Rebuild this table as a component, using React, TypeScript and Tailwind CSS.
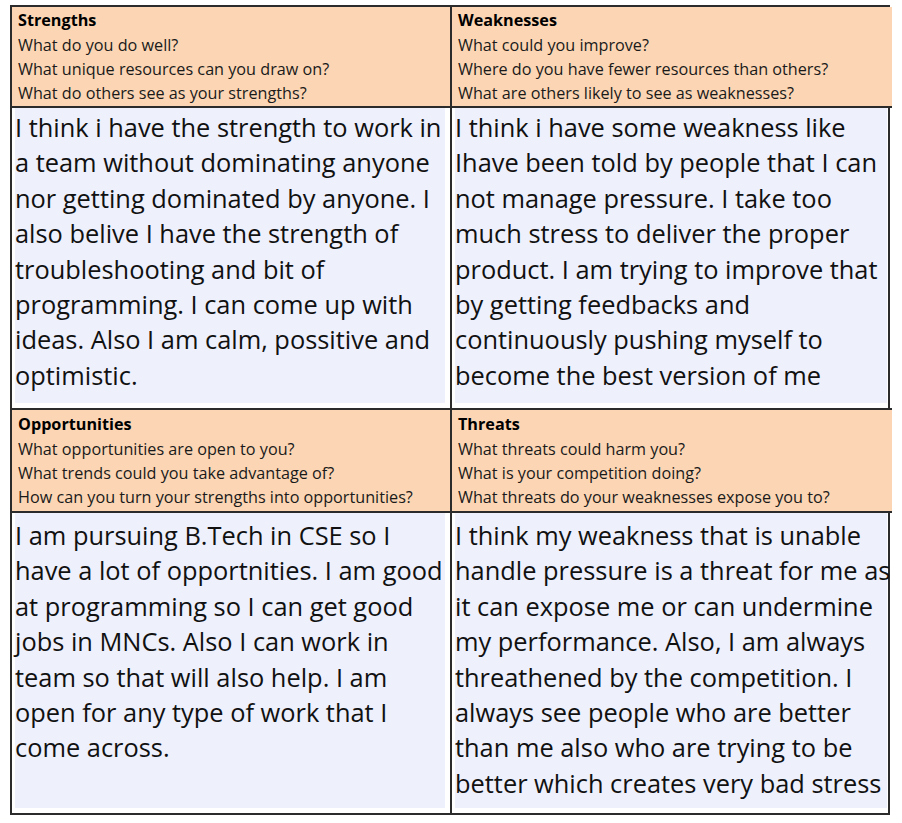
import React from 'react'

interface Quadrant {
  title: string
  prompts: string[]
  answer: string[]
}

// lines kept as they wrap in the original sheet
const quadrants: Quadrant[] = [
  {
    title: 'Strengths',
    prompts: [
      'What do you do well?',
      'What unique resources can you draw on?',
      'What do others see as your strengths?',
    ],
    answer: [
      'I think i have the strength to work in',
      'a team without dominating anyone',
      'nor getting dominated by anyone. I',
      'also belive I have the strength of',
      'troubleshooting and bit of',
      'programming. I can come up with',
      'ideas. Also I am calm, possitive and',
      'optimistic.',
    ],
  },
  {
    title: 'Weaknesses',
    prompts: [
      'What could you improve?',
      'Where do you have fewer resources than others?',
      'What are others likely to see as weaknesses?',
    ],
    answer: [
      'I think i have some weakness like',
      'Ihave been told by people that I can',
      'not manage pressure. I take too',
      'much stress to deliver the proper',
      'product. I am trying to improve that',
      'by getting feedbacks and',
      'continuously pushing myself to',
      'become the best version of me',
    ],
  },
  {
    title: 'Opportunities',
    prompts: [
      'What opportunities are open to you?',
      'What trends could you take advantage of?',
      'How can you turn your strengths into opportunities?',
    ],
    answer: [
      'I am pursuing B.Tech in CSE so I',
      'have a lot of opportnities. I am good',
      'at programming so I can get good',
      'jobs in MNCs. Also I can work in',
      'team so that will also help. I am',
      'open for any type of work that I',
      'come across.',
    ],
  },
  {
    title: 'Threats',
    prompts: [
      'What threats could harm you?',
      'What is your competition doing?',
      'What threats do your weaknesses expose you to?',
    ],
    answer: [
      'I think my weakness that is unable',
      'handle pressure is a threat for me as',
      'it can expose me or can undermine',
      'my performance. Also, I am always',
      'threathened by the competition. I',
      'always see people who are better',
      'than me also who are trying to be',
      'better which creates very bad stress',
    ],
  },
]

function Header({ q, right, first }: { q: Quadrant; right: boolean; first: boolean }) {
  return (
    <div
      className={`border-b-2 border-[#2b2b2b] bg-[#fcd6b4] pl-[6px] text-[16.2px] text-[#1a1a1a] ${
        right ? '' : 'border-r-2'
      } ${first ? 'h-[101px] pt-0' : 'h-[103px] pt-[1px]'}`}
      style={{ fontFamily: '"Open Sans", "Noto Sans", sans-serif' }}
    >
      <div className="font-bold leading-[26px] text-black">{q.title}</div>
      {q.prompts.map((p) => (
        <div key={p} className="whitespace-nowrap leading-[24px]">
          {p}
        </div>
      ))}
    </div>
  )
}

function Body({ q, right, last }: { q: Quadrant; right: boolean; last: boolean }) {
  return (
    <div
      className={`pl-[3px] pr-[5px] pb-[5px] ${right ? '' : 'border-r-2 border-[#2b2b2b]'} ${
        last ? 'h-[300px]' : 'h-[302px] border-b-2 border-[#2b2b2b]'
      }`}
    >
      <div
        className={`h-full bg-[#eef0fc] text-[25.4px] leading-[35.4px] text-[#111] ${
          last ? 'pt-[5px]' : 'pt-[2px]'
        }`}
        style={{ fontFamily: '"Open Sans", "Noto Sans", sans-serif' }}
      >
        {q.answer.map((line) => (
          <div key={line} className="whitespace-nowrap">
            {line}
          </div>
        ))}
      </div>
    </div>
  )
}

export default function App() {
  return (
    <div className="min-h-[823px] w-[902px] bg-white pl-[10px] pt-[5px]">
      <div className="grid w-[880px] grid-cols-[440px_440px] border-2 border-[#2b2b2b]">
        <Header q={quadrants[0]} right={false} first={true} />
        <Header q={quadrants[1]} right={true} first={true} />
        <Body q={quadrants[0]} right={false} last={false} />
        <Body q={quadrants[1]} right={true} last={false} />
        <Header q={quadrants[2]} right={false} first={false} />
        <Header q={quadrants[3]} right={true} first={false} />
        <Body q={quadrants[2]} right={false} last={true} />
        <Body q={quadrants[3]} right={true} last={true} />
      </div>
    </div>
  )
}
